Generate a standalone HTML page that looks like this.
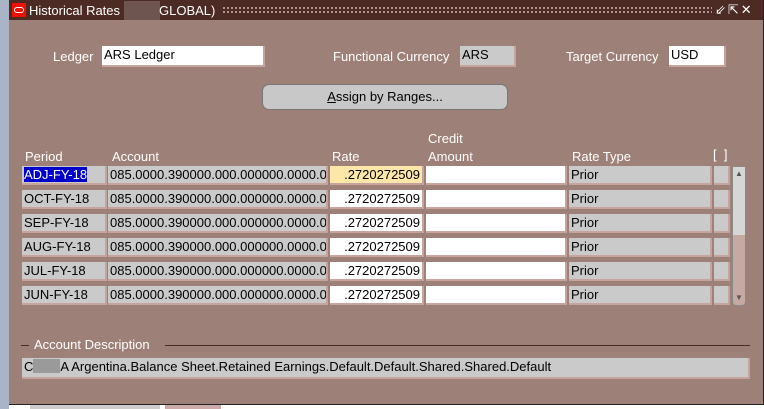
<html><head><style>
body{margin:0;width:764px;height:409px;background:#fff;position:relative;overflow:hidden;font-family:"Liberation Sans",Arial,sans-serif;font-size:13px}
.a{position:absolute}
.win{left:9px;top:0;width:754px;height:404px;background:#9d8077;border-right:1px solid #222;border-bottom:1px solid #222}
.tb{left:0;top:0;width:754px;height:20px;background:#4c2b25}
.lbl{color:#fff;font-size:13px}
.f{position:absolute;height:19px;box-sizing:border-box;line-height:18px;padding:0 2px;font-size:13px;color:#000;white-space:nowrap;overflow:hidden;border-right:2px solid #c4a49c;border-bottom:2px solid #c4a49c}
.w{background:#fff}.g{background:#cacaca}
</style></head><body>
<div class="a" style="left:0;top:0;width:9px;height:409px;background:#aab4c8"></div>
<div class="a" style="left:30px;top:404px;width:130px;height:5px;background:#ccc"></div>
<div class="a" style="left:165px;top:404px;width:56px;height:5px;background:#caa"></div>
<div class="a win">
 <div class="a tb">
  <div class="a" style="left:3px;top:3px;width:14px;height:14px;background:#e10"><div class="a" style="left:2px;top:4px;width:8px;height:4px;border:1px solid #fff;border-radius:4px"></div></div>
  <div class="a" style="left:20px;top:3px;color:#fff;font-size:13px">Historical Rates (</div>
  <div class="a" style="left:115px;top:1px;width:36px;height:19px;background:#6e5550"></div>
  <div class="a" style="left:150px;top:3px;color:#fff;font-size:13px">GLOBAL)</div>
  <div class="a" style="left:213px;top:6px;width:490px;height:8px;background-image:radial-gradient(#b89c94 1px,transparent 1.2px);background-size:4px 4px"></div>
  <div class="a" style="left:706px;top:2px;color:#fff;font-size:13px;letter-spacing:2px">⇙⇱✕</div>
 </div>
 <div class="a lbl" style="left:44px;top:49px">Ledger</div>
 <div class="f w" style="left:93px;top:46px;width:163px;height:21px">ARS Ledger</div>
 <div class="a lbl" style="left:324px;top:49px">Functional Currency</div>
 <div class="f g" style="left:451px;top:46px;width:56px;height:21px">ARS</div>
 <div class="a lbl" style="left:557px;top:49px">Target Currency</div>
 <div class="f w" style="left:660px;top:46px;width:57px;height:21px">USD</div>
 <div class="a" style="left:253px;top:84px;width:246px;height:26px;background:#c8c8c8;border-radius:7px;border:1px solid #777;box-sizing:border-box;text-align:center;line-height:24px;font-size:13px"><u>A</u>ssign by Ranges...</div>
 <div class="a lbl" style="left:16px;top:149px">Period</div>
 <div class="a lbl" style="left:103px;top:149px">Account</div>
 <div class="a lbl" style="left:323px;top:149px">Rate</div>
 <div class="a lbl" style="left:419px;top:130px;line-height:18px">Credit<br>Amount</div>
 <div class="a lbl" style="left:563px;top:149px">Rate Type</div>
 <div class="a lbl" style="left:704px;top:147px">[&nbsp;&nbsp;]</div>
 <div id="rows"></div>
 <div class="a" style="left:723px;top:166px;width:14px;height:140px;background:#c5a9a2;border:1px solid #888;box-sizing:border-box;border-radius:4px"></div>
 <div class="a" style="left:724px;top:167px;width:12px;height:68px;background:#d6d6d6"></div>
 <div class="a" style="left:726px;top:169px;font-size:8px;color:#555">▲</div>
 <div class="a" style="left:726px;top:293px;font-size:8px;color:#555">▼</div>
 <div class="a" style="left:12px;top:345px;width:8px;height:1px;background:#4c2b25"></div>
 <div class="a lbl" style="left:25px;top:337px">Account Description</div>
 <div class="a" style="left:156px;top:345px;width:585px;height:1px;background:#4c2b25"></div>
 <div class="f g" style="left:13px;top:358px;width:728px;height:21px">C<span style="background:#9a9a9a;display:inline-block;width:27px;height:14px;vertical-align:-2px"></span>A Argentina.Balance Sheet.Retained Earnings.Default.Default.Shared.Shared.Default</div>
</div>
<script>
var p=["ADJ-FY-18","OCT-FY-18","SEP-FY-18","AUG-FY-18","JUL-FY-18","JUN-FY-18"],h="";
p.forEach(function(x,i){var y=166+i*24;
h+='<div class="f g" style="left:13px;top:'+y+'px;width:85px">'+(i==0?'<span style="background:#00c;color:#fff">'+x+'</span>':x)+'</div>';
h+='<div class="f g" style="left:99px;top:'+y+'px;width:220px">085.0000.390000.000.000000.0000.00</div>';
h+='<div class="f" style="left:321px;top:'+y+'px;width:94px;text-align:right;background:'+(i==0?'#fce6a8':'#fff')+'">.2720272509</div>';
h+='<div class="f w" style="left:417px;top:'+y+'px;width:141px"></div>';
h+='<div class="f g" style="left:560px;top:'+y+'px;width:143px">Prior</div>';
h+='<div class="f g" style="left:705px;top:'+y+'px;width:16px"></div>';});
document.getElementById("rows").innerHTML=h;
</script>
</body></html>
